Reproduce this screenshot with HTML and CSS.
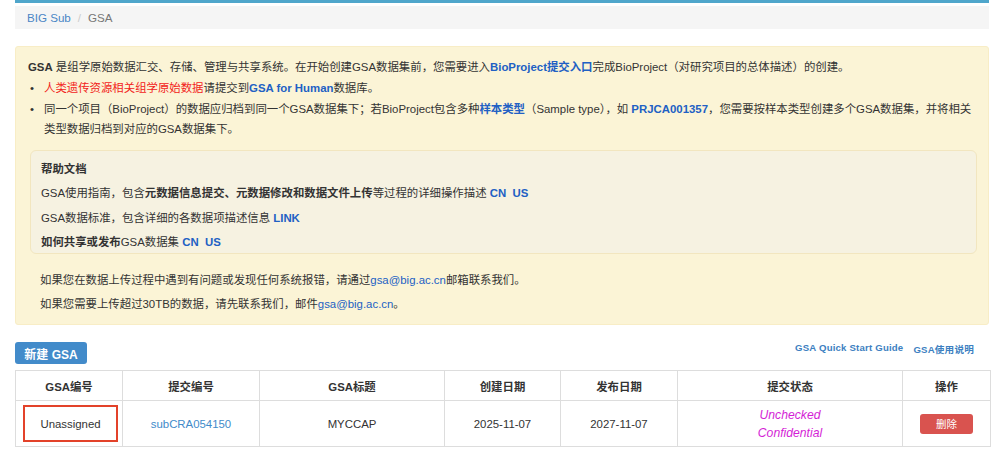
FILE: index.html
```html
<!DOCTYPE html>
<html lang="zh-CN">
<head>
<meta charset="utf-8">
<title>GSA</title>
<link rel="stylesheet" href="styles.css">
</head>
<body>
<div class="page">
  <div class="topbar"></div>
  <div class="breadcrumb"><a href="#" class="crumb-link">BIG Sub</a><span class="sep">/</span><span class="crumb-cur">GSA</span></div>

  <div class="alert">
    <p class="line"><b>GSA</b> 是组学原始数据汇交、存储、管理与共享系统。在开始创建GSA数据集前，您需要进入<a href="#" class="blink">BioProject提交入口</a>完成BioProject（对研究项目的总体描述）的创建。</p>
    <ul class="bullets">
      <li><span class="red">人类遗传资源相关组学原始数据</span>请提交到<a href="#" class="blink">GSA for Human</a>数据库。</li>
      <li>同一个项目（BioProject）的数据应归档到同一个GSA数据集下；若BioProject包含多种<a href="#" class="blink">样本类型</a>（Sample type），如 <a href="#" class="blink">PRJCA001357</a>，您需要按样本类型创建多个GSA数据集，并将相关类型数据归档到对应的GSA数据集下。</li>
    </ul>
    <div class="help">
      <p class="hline"><b>帮助文档</b></p>
      <p class="hline">GSA使用指南，包含<b>元数据信息提交、元数据修改和数据文件上传</b>等过程的详细操作描述 <a href="#" class="blink">CN</a>&nbsp; <a href="#" class="blink">US</a></p>
      <p class="hline">GSA数据标准，包含详细的各数据项描述信息 <a href="#" class="blink">LINK</a></p>
      <p class="hline"><b>如何共享或发布</b>GSA数据集 <a href="#" class="blink">CN</a>&nbsp; <a href="#" class="blink">US</a></p>
    </div>
    <div class="contact">
      <p class="hline">如果您在数据上传过程中遇到有问题或发现任何系统报错，请通过<a href="#" class="mlink">gsa@big.ac.cn</a>邮箱联系我们。</p>
      <p class="hline">如果您需要上传超过30TB的数据，请先联系我们，邮件<a href="#" class="mlink">gsa@big.ac.cn</a>。</p>
    </div>
  </div>

  <div class="toolbar">
    <button class="btn-new">新建 GSA</button>
    <div class="guides"><a href="#" class="glink">GSA Quick Start Guide</a><a href="#" class="glink">GSA使用说明</a></div>
  </div>

  <table class="grid">
    <colgroup>
      <col class="c1"><col class="c2"><col class="c3"><col class="c4"><col class="c5"><col class="c6"><col class="c7">
    </colgroup>
    <thead>
      <tr><th>GSA编号</th><th>提交编号</th><th>GSA标题</th><th>创建日期</th><th>发布日期</th><th>提交状态</th><th>操作</th></tr>
    </thead>
    <tbody>
      <tr>
        <td class="acc-cell"><span class="acc">Unassigned</span></td>
        <td><a href="#" class="sublink">subCRA054150</a></td>
        <td>MYCCAP</td>
        <td>2025-11-07</td>
        <td>2027-11-07</td>
        <td class="status">Unchecked<br>Confidential</td>
        <td><button class="btn-del">删除</button></td>
      </tr>
    </tbody>
  </table>
</div>
</body>
</html>
```

FILE: styles.css
```css
html, body {
  margin: 0;
  padding: 0;
  background: #fff;
}
body {
  font-family: "Liberation Sans", "Noto Sans CJK SC", sans-serif;
  font-size: 11.4px;
  color: #333;
}
a { text-decoration: none; }
p { margin: 0; }

.page {
  width: 974px;
  margin-left: 15px;
}
.topbar {
  height: 3px;
  background: #4fa6cb;
}
.breadcrumb {
  margin-top: 3px;
  height: 23px;
  line-height: 23px;
  background: #f5f5f5;
  padding: 0 12px;
  font-size: 11.6px;
}
.crumb-link { color: #4a86c5; }
.sep { color: #ccc; padding: 0 7px; }
.crumb-cur { color: #777; }

.alert {
  margin-top: 17px;
  background: #fbf4d6;
  border: 1px solid #f8edc6;
  border-radius: 3px;
  padding: 10px 12px 8px 12px;
  height: 279px;
  box-sizing: border-box;
}
.line { line-height: 20.3px; }
.bullets {
  margin: 1px 0 0 0;
  padding: 0;
  list-style: none;
}
.bullets li {
  position: relative;
  padding-left: 16px;
  line-height: 20.5px;
}
.bullets li::before {
  content: "•";
  position: absolute;
  left: 2px;
  top: 0;
}
.red { color: #f2221a; }
.blink { color: #2160c4; font-weight: bold; }
.mlink { color: #2160c4; }

.help {
  margin: 10px 0 0 2px;
  width: 947px;
  box-sizing: border-box;
  background: #f6f2e1;
  border: 1px solid #f2e6bf;
  border-radius: 6px;
  padding: 6px 10px 0 10px;
  height: 104px;
}
.hline { line-height: 24.5px; }

.contact {
  padding: 14px 0 0 12px;
}

.toolbar {
  margin-top: 17px;
  display: flex;
  justify-content: space-between;
  align-items: flex-start;
  height: 28px;
}
.btn-new {
  height: 22px;
  width: 72px;
  border: none;
  border-radius: 3px;
  background: #428bca;
  color: #fff;
  font-family: inherit;
  font-size: 12px;
  font-weight: bold;
  padding: 0;
  cursor: pointer;
}
.guides {
  display: flex;
  gap: 10px;
  padding: 0 15px 0 0;
}
.glink {
  color: #3d7fc1;
  font-size: 9.6px;
  font-weight: bold;
  letter-spacing: 0.2px;
}

.grid {
  width: 975px;
  border-collapse: collapse;
  table-layout: fixed;
}
.c1 { width: 107px; }
.c2 { width: 137px; }
.c3 { width: 185px; }
.c4 { width: 116px; }
.c5 { width: 117px; }
.c6 { width: 225px; }
.c7 { width: 88px; }
.grid th, .grid td {
  border: 1px solid #ddd;
  text-align: center;
  vertical-align: middle;
  padding: 0;
}
.grid th {
  height: 29px;
  font-weight: bold;
}
.grid td {
  height: 45px;
}
.acc-cell { padding: 0; }
.acc {
  display: flex;
  align-items: center;
  justify-content: center;
  margin: 0 4px 0 7px;
  height: 33px;
  border: 2px solid #e3422a;
}
.sublink { color: #428bca; }
.status {
  color: #d41fd6;
  font-style: italic;
  font-size: 12.2px;
  line-height: 18px;
}
.btn-del {
  width: 53px;
  height: 20px;
  border: none;
  border-radius: 3px;
  background: #d9534f;
  color: #fff;
  font-family: inherit;
  font-size: 10.5px;
  padding: 0;
  cursor: pointer;
}
```
